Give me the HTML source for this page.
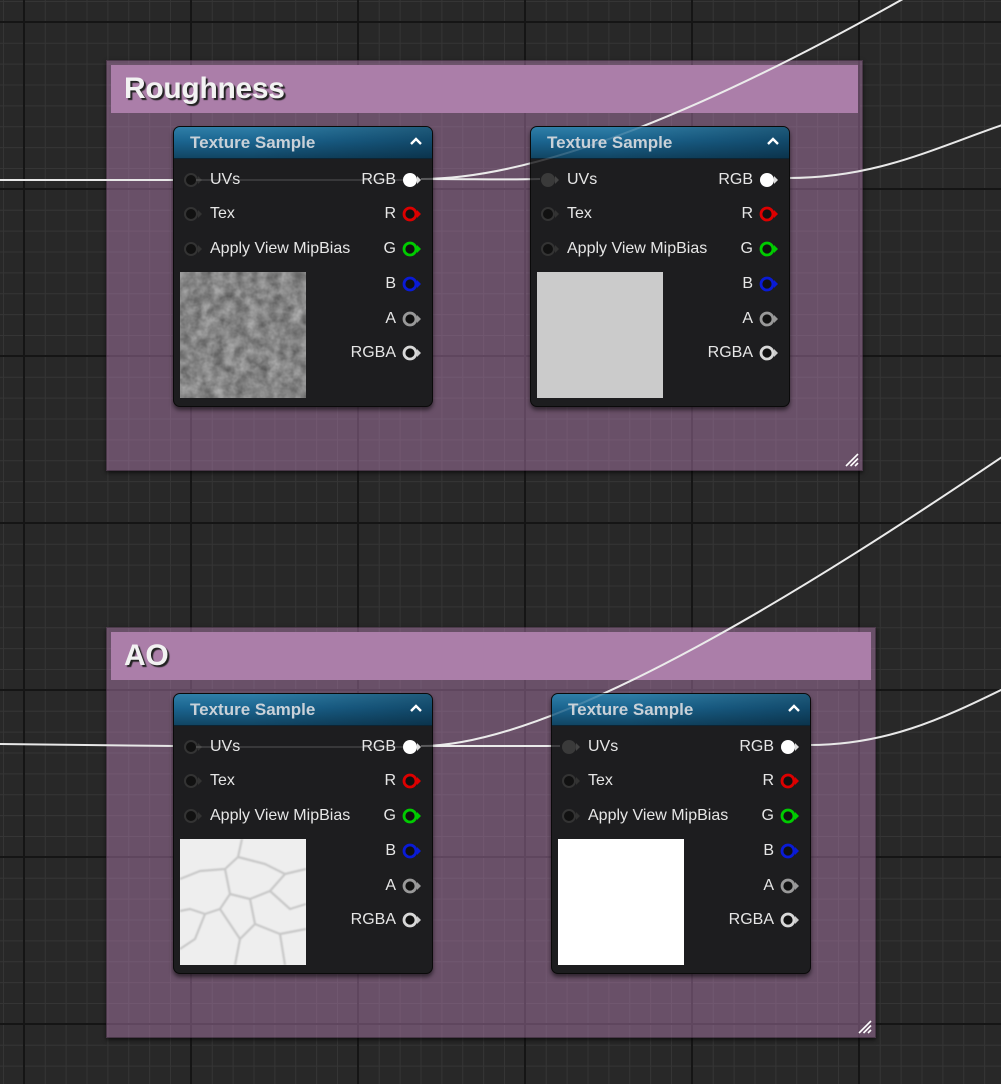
<!DOCTYPE html>
<html><head><meta charset="utf-8"><style>
html,body{margin:0;padding:0}
body{width:1001px;height:1084px;overflow:hidden;position:relative;font-family:"Liberation Sans",sans-serif;
background-color:#282828;
background-image:
linear-gradient(to right,#151515 2px,transparent 2px),
linear-gradient(to bottom,#151515 2px,transparent 2px),
linear-gradient(to right,#353535 1px,transparent 1px),
linear-gradient(to bottom,#353535 1px,transparent 1px);
background-size:167px 167px,167px 167px,20.875px 20.875px,20.875px 20.875px;
background-position:23px 0,0 21px,3px 0,0 1px;}
.cm{position:absolute;background:rgba(178,125,176,0.48);box-shadow:0 2px 4px rgba(0,0,0,.6);border:1px solid rgba(0,0,0,.3)}
.cm .hd{position:absolute;left:4px;right:4px;top:4px;height:48px;background:#ab7ea9;}
.cm .hd span{position:absolute;left:13px;top:7px;font-size:30px;font-weight:bold;color:#f2f2f2;text-shadow:2px 2px 1px #222;letter-spacing:-.3px}
.grip{position:absolute;right:3px;bottom:3px;width:16px;height:16px}
.nd{position:absolute;width:258px;height:279px;background:#1d1d1f;border:1px solid #0a0a0a;border-radius:7px;box-shadow:0 3px 4px rgba(0,0,0,.55);overflow:hidden}
.nh{position:absolute;left:0;right:0;top:0;height:31px;background:linear-gradient(to bottom,#2f7fa8 0,#1b6590 45%,#114563 100%);border-bottom:1px solid #0d2433}
.nh:after{content:"";position:absolute;inset:0;background:linear-gradient(to right,rgba(0,0,0,0) 30%,rgba(0,20,35,.35) 100%)}
.nh span{position:absolute;left:16px;top:6px;font-size:17px;font-weight:bold;color:#c9d1d8;z-index:1}
.car{position:absolute;right:9px;top:9px;z-index:1}
.lb{position:absolute;font-size:16px;color:#e6e6e6;line-height:20px}
.pin{position:absolute}
.tex{position:absolute;left:6px;top:145px;width:126px;height:126px}
</style></head><body>

<div class="cm" style="left:106px;top:60px;width:755px;height:409px">
<div class="hd"><span>Roughness</span></div>
<svg class="grip" viewBox="0 0 16 16"><g stroke="#fff" stroke-width="1.6"><line x1="15" y1="3" x2="3" y2="15"/><line x1="15" y1="7.5" x2="7.5" y2="15"/><line x1="15" y1="12" x2="12" y2="15"/></g></svg>
</div>
<div class="cm" style="left:106px;top:627px;width:768px;height:409px">
<div class="hd"><span>AO</span></div>
<svg class="grip" viewBox="0 0 16 16"><g stroke="#fff" stroke-width="1.6"><line x1="15" y1="3" x2="3" y2="15"/><line x1="15" y1="7.5" x2="7.5" y2="15"/><line x1="15" y1="12" x2="12" y2="15"/></g></svg>
</div>

<svg style="position:absolute;left:0;top:0" width="1001" height="1084">
<g fill="none" stroke="#e8e8e8" stroke-width="2">
<path d="M0,180 L175,180"/>
<path d="M0,744 L175,746"/>
<path d="M421,179 C480,179 500,180 540,179"/>
<path d="M421,746 C480,746 520,746 560,746"/>
<path d="M421,179 C560,179 760,80 910,-5"/>
<path d="M421,746 C560,746 820,580 1005,455"/>
<path d="M788,178 C875,178 930,150 1005,124"/>
<path d="M809,745 C885,745 940,720 1005,688"/>
</g></svg>

<svg width="0" height="0" style="position:absolute">
<filter id="rough" x="0" y="0" width="1" height="1" color-interpolation-filters="sRGB"><feTurbulence type="fractalNoise" baseFrequency="0.09" numOctaves="3" seed="4"/><feColorMatrix type="matrix" values="0.35 0.25 0 0 0.22  0.35 0.25 0 0 0.22  0.35 0.25 0 0 0.22  0 0 0 0 1"/></filter>
<filter id="bl"><feGaussianBlur stdDeviation="0.8"/></filter>
</svg>

<div class="nd" style="left:173px;top:126px">
<div class="nh"><span>Texture Sample</span><svg class="car" width="14" height="10" viewBox="0 0 14 10"><path d="M2,8 L7,3 L12,8" stroke="#fff" stroke-width="2.4" fill="none"/></svg></div>
<div class="lb" style="left:36px;top:43px">UVs</div><div class="lb" style="left:36px;top:77px">Tex</div><div class="lb" style="left:36px;top:112px">Apply View MipBias</div>
<div class="lb" style="right:36px;top:43px">RGB</div><div class="lb" style="right:36px;top:77px">R</div><div class="lb" style="right:36px;top:112px">G</div><div class="lb" style="right:36px;top:147px">B</div><div class="lb" style="right:36px;top:182px">A</div><div class="lb" style="right:36px;top:216px">RGBA</div>
<svg class="pin" style="left:0;top:0" width="258" height="279">
<g fill="#111" stroke="#333" stroke-width="2"><circle cx="17" cy="53" r="6"/><circle cx="17" cy="87" r="6"/><circle cx="17" cy="122" r="6"/></g>
<g fill="#333"><path d="M24,49 l4,4 l-4,4z"/><path d="M24,83 l4,4 l-4,4z"/><path d="M24,118 l4,4 l-4,4z"/></g>
<circle cx="236" cy="53" r="7" fill="#fff"/><path d="M243,49 l4,4 l-4,4z" fill="#ddd"/>
<g fill="#111" stroke-width="2.8"><circle cx="236" cy="87" r="6" stroke="#d00"/><circle cx="236" cy="122" r="6" stroke="#0c0"/><circle cx="236" cy="157" r="6" stroke="#0a1bd6"/><circle cx="236" cy="192" r="6" stroke="#999"/><circle cx="236" cy="226" r="6" stroke="#d8d8d8"/></g>
<path d="M243,83 l4,4 l-4,4z" fill="#d00"/><path d="M243,118 l4,4 l-4,4z" fill="#0c0"/><path d="M243,153 l4,4 l-4,4z" fill="#0a1bd6"/><path d="M243,188 l4,4 l-4,4z" fill="#999"/><path d="M243,222 l4,4 l-4,4z" fill="#ccc"/>
<line x1="22" y1="53" x2="229" y2="53" stroke="#fff" stroke-opacity=".12" stroke-width="2"/>
</svg>
<svg class="tex" viewBox="0 0 126 126"><rect width="126" height="126" fill="#999" filter="url(#rough)"/></svg>
</div>

<div class="nd" style="left:530px;top:126px">
<div class="nh"><span>Texture Sample</span><svg class="car" width="14" height="10" viewBox="0 0 14 10"><path d="M2,8 L7,3 L12,8" stroke="#fff" stroke-width="2.4" fill="none"/></svg></div>
<div class="lb" style="left:36px;top:43px">UVs</div><div class="lb" style="left:36px;top:77px">Tex</div><div class="lb" style="left:36px;top:112px">Apply View MipBias</div>
<div class="lb" style="right:36px;top:43px">RGB</div><div class="lb" style="right:36px;top:77px">R</div><div class="lb" style="right:36px;top:112px">G</div><div class="lb" style="right:36px;top:147px">B</div><div class="lb" style="right:36px;top:182px">A</div><div class="lb" style="right:36px;top:216px">RGBA</div>
<svg class="pin" style="left:0;top:0" width="258" height="279">
<circle cx="17" cy="53" r="7" fill="#3a3a3a"/><path d="M24,49 l4,4 l-4,4z" fill="#444"/>
<g fill="#111" stroke="#333" stroke-width="2"><circle cx="17" cy="87" r="6"/><circle cx="17" cy="122" r="6"/></g>
<g fill="#333"><path d="M24,83 l4,4 l-4,4z"/><path d="M24,118 l4,4 l-4,4z"/></g>
<circle cx="236" cy="53" r="7" fill="#fff"/><path d="M243,49 l4,4 l-4,4z" fill="#ddd"/>
<g fill="#111" stroke-width="2.8"><circle cx="236" cy="87" r="6" stroke="#d00"/><circle cx="236" cy="122" r="6" stroke="#0c0"/><circle cx="236" cy="157" r="6" stroke="#0a1bd6"/><circle cx="236" cy="192" r="6" stroke="#999"/><circle cx="236" cy="226" r="6" stroke="#d8d8d8"/></g>
<path d="M243,83 l4,4 l-4,4z" fill="#d00"/><path d="M243,118 l4,4 l-4,4z" fill="#0c0"/><path d="M243,153 l4,4 l-4,4z" fill="#0a1bd6"/><path d="M243,188 l4,4 l-4,4z" fill="#999"/><path d="M243,222 l4,4 l-4,4z" fill="#ccc"/>
</svg>
<div class="tex" style="background:#cbcbcb"></div>
</div>

<div class="nd" style="left:173px;top:693px">
<div class="nh"><span>Texture Sample</span><svg class="car" width="14" height="10" viewBox="0 0 14 10"><path d="M2,8 L7,3 L12,8" stroke="#fff" stroke-width="2.4" fill="none"/></svg></div>
<div class="lb" style="left:36px;top:43px">UVs</div><div class="lb" style="left:36px;top:77px">Tex</div><div class="lb" style="left:36px;top:112px">Apply View MipBias</div>
<div class="lb" style="right:36px;top:43px">RGB</div><div class="lb" style="right:36px;top:77px">R</div><div class="lb" style="right:36px;top:112px">G</div><div class="lb" style="right:36px;top:147px">B</div><div class="lb" style="right:36px;top:182px">A</div><div class="lb" style="right:36px;top:216px">RGBA</div>
<svg class="pin" style="left:0;top:0" width="258" height="279">
<g fill="#111" stroke="#333" stroke-width="2"><circle cx="17" cy="53" r="6"/><circle cx="17" cy="87" r="6"/><circle cx="17" cy="122" r="6"/></g>
<g fill="#333"><path d="M24,49 l4,4 l-4,4z"/><path d="M24,83 l4,4 l-4,4z"/><path d="M24,118 l4,4 l-4,4z"/></g>
<circle cx="236" cy="53" r="7" fill="#fff"/><path d="M243,49 l4,4 l-4,4z" fill="#ddd"/>
<g fill="#111" stroke-width="2.8"><circle cx="236" cy="87" r="6" stroke="#d00"/><circle cx="236" cy="122" r="6" stroke="#0c0"/><circle cx="236" cy="157" r="6" stroke="#0a1bd6"/><circle cx="236" cy="192" r="6" stroke="#999"/><circle cx="236" cy="226" r="6" stroke="#d8d8d8"/></g>
<path d="M243,83 l4,4 l-4,4z" fill="#d00"/><path d="M243,118 l4,4 l-4,4z" fill="#0c0"/><path d="M243,153 l4,4 l-4,4z" fill="#0a1bd6"/><path d="M243,188 l4,4 l-4,4z" fill="#999"/><path d="M243,222 l4,4 l-4,4z" fill="#ccc"/>
<line x1="22" y1="53" x2="229" y2="53" stroke="#fff" stroke-opacity=".12" stroke-width="2"/>
</svg>
<svg class="tex" viewBox="0 0 126 126"><rect width="126" height="126" fill="#eeeeee"/>
<g fill="none" stroke="#c8c8c8" stroke-width="2.2" stroke-linejoin="round" filter="url(#bl)">
<path d="M0,40 L20,32 L45,30 L58,18 L62,0"/><path d="M58,18 L85,25 L105,35 L126,30"/><path d="M45,30 L50,55 L40,70 L25,75 L15,100 L0,110"/><path d="M50,55 L70,60 L90,52 L105,35"/><path d="M70,60 L75,85 L60,100 L55,126"/><path d="M75,85 L100,95 L126,90"/><path d="M90,52 L110,70 L126,65"/><path d="M25,75 L10,70 L0,72"/><path d="M40,70 L60,100"/><path d="M100,95 L105,126"/></g></svg>
</div>

<div class="nd" style="left:551px;top:693px">
<div class="nh"><span>Texture Sample</span><svg class="car" width="14" height="10" viewBox="0 0 14 10"><path d="M2,8 L7,3 L12,8" stroke="#fff" stroke-width="2.4" fill="none"/></svg></div>
<div class="lb" style="left:36px;top:43px">UVs</div><div class="lb" style="left:36px;top:77px">Tex</div><div class="lb" style="left:36px;top:112px">Apply View MipBias</div>
<div class="lb" style="right:36px;top:43px">RGB</div><div class="lb" style="right:36px;top:77px">R</div><div class="lb" style="right:36px;top:112px">G</div><div class="lb" style="right:36px;top:147px">B</div><div class="lb" style="right:36px;top:182px">A</div><div class="lb" style="right:36px;top:216px">RGBA</div>
<svg class="pin" style="left:0;top:0" width="258" height="279">
<circle cx="17" cy="53" r="7" fill="#3a3a3a"/><path d="M24,49 l4,4 l-4,4z" fill="#444"/>
<g fill="#111" stroke="#333" stroke-width="2"><circle cx="17" cy="87" r="6"/><circle cx="17" cy="122" r="6"/></g>
<g fill="#333"><path d="M24,83 l4,4 l-4,4z"/><path d="M24,118 l4,4 l-4,4z"/></g>
<circle cx="236" cy="53" r="7" fill="#fff"/><path d="M243,49 l4,4 l-4,4z" fill="#ddd"/>
<g fill="#111" stroke-width="2.8"><circle cx="236" cy="87" r="6" stroke="#d00"/><circle cx="236" cy="122" r="6" stroke="#0c0"/><circle cx="236" cy="157" r="6" stroke="#0a1bd6"/><circle cx="236" cy="192" r="6" stroke="#999"/><circle cx="236" cy="226" r="6" stroke="#d8d8d8"/></g>
<path d="M243,83 l4,4 l-4,4z" fill="#d00"/><path d="M243,118 l4,4 l-4,4z" fill="#0c0"/><path d="M243,153 l4,4 l-4,4z" fill="#0a1bd6"/><path d="M243,188 l4,4 l-4,4z" fill="#999"/><path d="M243,222 l4,4 l-4,4z" fill="#ccc"/>
</svg>
<div class="tex" style="background:#ffffff"></div>
</div>

<svg style="position:absolute;left:0;top:0;pointer-events:none" width="1001" height="1084">
<g fill="none" stroke="#fff" stroke-opacity=".15" stroke-width="2">
<path d="M421,179 C560,179 760,80 910,-5"/>
<path d="M421,746 C560,746 820,580 1005,455"/>
<path d="M421,179 C480,179 500,180 540,179"/>
<path d="M421,746 C480,746 520,746 560,746"/>
</g></svg>
</body></html>
